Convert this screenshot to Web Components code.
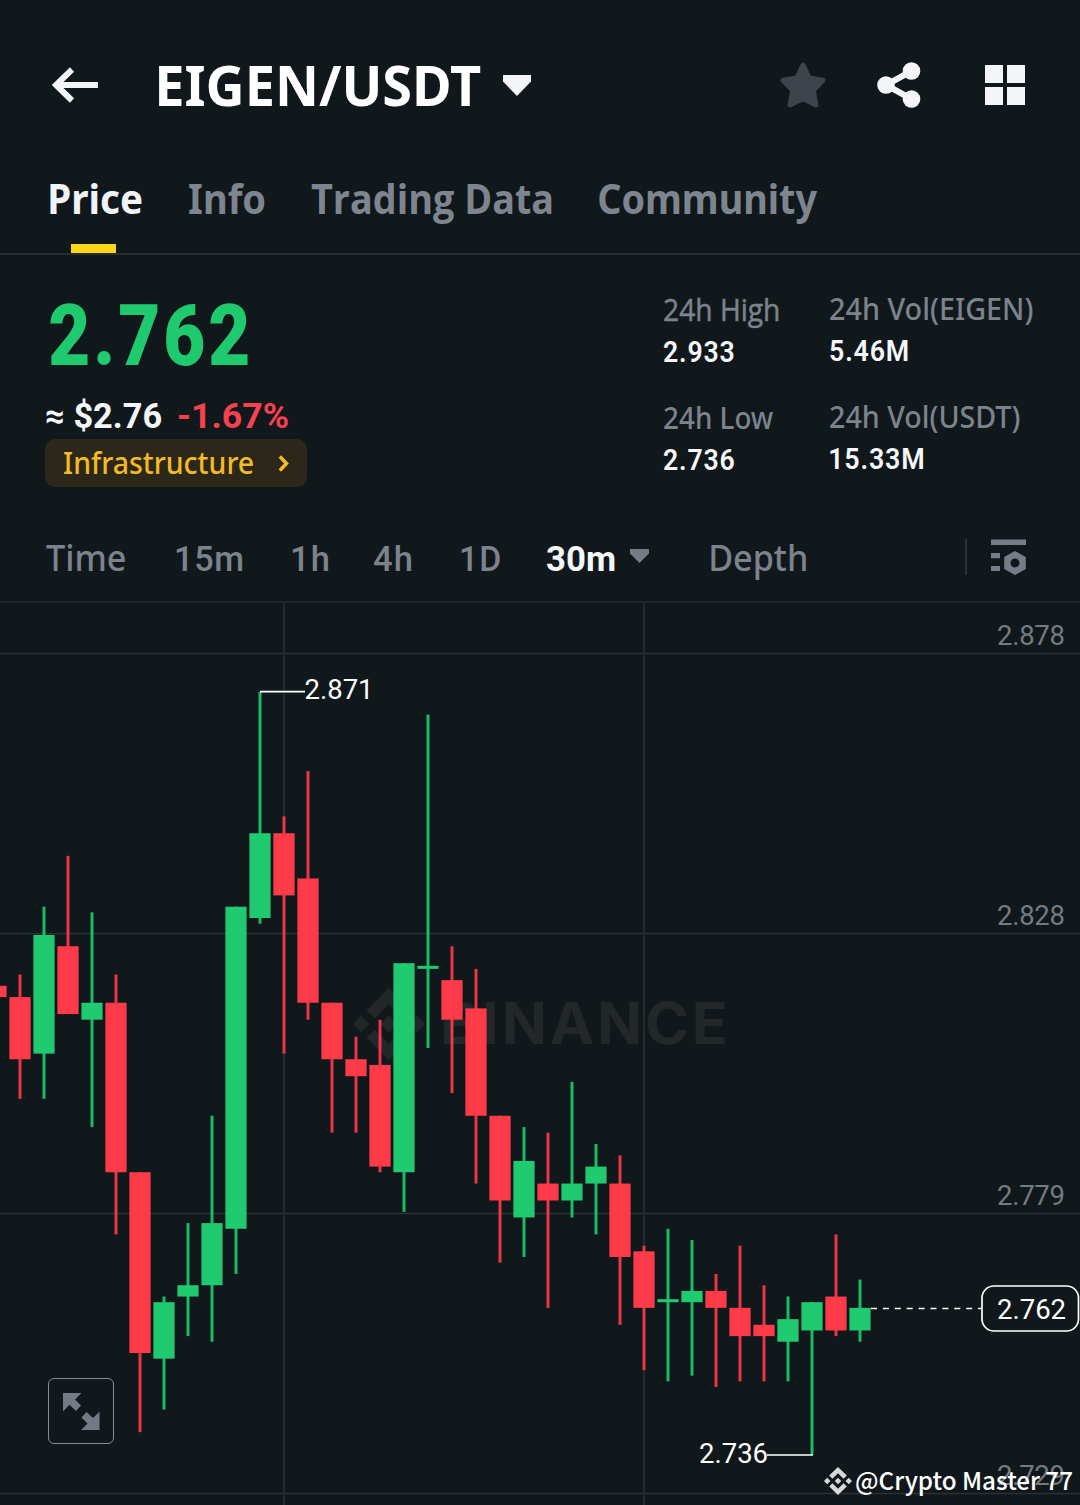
<!DOCTYPE html>
<html lang="en">
<head>
<meta charset="utf-8">
<title>EIGEN/USDT</title>
<style>
html, body {
  margin: 0;
  background: #11181c;
}
body {
  width: 1080px;
  height: 1505px;
  overflow: hidden;
}
</style>
</head>
<body>
<market-page></market-page>

<script>
const define = (name, html, setup) => {
  const template = document.createElement('template');
  template.innerHTML = html;
  window.customElements.define(name, class extends HTMLElement {
    constructor() {
      super();
      const root = this.attachShadow({ mode: 'open' });
      root.appendChild(template.content.cloneNode(true));
    }

    connectedCallback() {
      if (setup) setup(this, this.shadowRoot);
    }
  });
};

// A label whose box is its ink: `w` wide and `cap` high, baseline on the bottom edge.
const measure = document.createElement('canvas').getContext('2d');
const CAPS = { 'Roboto': 0.711, 'Noto Sans': 0.714, 'Open Sans': 0.714, 'Inter': 0.727, 'Noto Sans CJK SC': 0.733 };

define('fit-text', `
<style>
:host {
  display: block;
  flex: none;
}
span {
  display: block;
  width: max-content;
  white-space: nowrap;
  transform-origin: 0 0;
}
</style>
<span><slot></slot></span>
`, (me, root) => {
  const family = me.getAttribute('font') || 'Noto Sans';
  const weight = me.getAttribute('weight') || '400';
  const w = Number(me.getAttribute('w'));
  const cap = Number(me.getAttribute('cap'));
  const size = cap / CAPS[family];
  const spacing = `${size * Number(me.getAttribute('spacing') || 0)}px`;
  measure.font = `${weight} ${size}px "${family}", sans-serif`;
  measure.letterSpacing = spacing;
  const m = measure.measureText(me.textContent);
  const scale = w / (m.actualBoundingBoxLeft + m.actualBoundingBoxRight);
  const x = m.actualBoundingBoxLeft * scale;
  const y = (cap - m.fontBoundingBoxAscent + m.fontBoundingBoxDescent) / 2;
  me.style.width = `${w}px`;
  me.style.height = `${cap}px`;
  const span = root.querySelector('span');
  span.style.font = `${weight} ${size}px/${cap}px "${family}", sans-serif`;
  span.style.letterSpacing = spacing;
  span.style.transform = `translate(${x}px, ${y}px) scaleX(${scale})`;
});

const BINANCE = `
  <path d="M38.2 53.2 63.3 28.1 88.5 53.2 103.1 38.6 63.3 0 23.6 38.6Z
    M0 63.3 14.6 48.7 29.2 63.3 14.6 77.9Z
    M38.2 73.4 63.3 98.5 88.5 73.4 103.1 88 63.3 126.6 23.6 88Z
    M97.4 63.3 112 48.7 126.6 63.3 112 77.9Z
    M63.3 48.4 78.2 63.3 63.3 78.2 48.4 63.3Z"/>`;

const ICONS = {
  back: [46, 36, '<path d="M20 2.500 4 18l16 15.500M4.500 18H46" fill="none" stroke="currentColor" stroke-width="6"/>'],
  caret: [28, 21, '<path d="M0 0H28V6.500L14 21 0 6.500Z"/>'],
  star: [46, 46, '<path d="M23 3 29.200 16 43 18.200 33.200 28.500 36 43 23 36.500 10 43 12.800 28.500 3 18.200 16.800 16Z" stroke="currentColor" stroke-width="5" stroke-linejoin="round"/>'],
  share: [44, 46, '<path d="M34.500 9 9 23l25.500 14" fill="none" stroke="currentColor" stroke-width="6"/><circle cx="34.500" cy="9" r="8.800"/><circle cx="9" cy="23" r="8.800"/><circle cx="34.500" cy="37" r="8.800"/>'],
  grid: [40, 40, '<path d="M0 0H18V18H0ZM22 0H40V18H22ZM0 22H18V40H0ZM22 22H40V40H22Z"/>'],
  chevron: [11, 17, '<path d="M1.800 1.500 8.500 8.500 1.800 15.500" fill="none" stroke="currentColor" stroke-width="3.500"/>'],
  drop: [19, 14, '<path d="M0 0H19V4.500L9.500 14 0 4.500Z"/>'],
  settings: [35, 36, '<path d="M0 .5H35V6H0ZM0 14H9V19.200H0ZM0 27H9V32H0Z"/><path fill-rule="evenodd" d="M24 12 34.800 18V30L24 36 13.200 30V18ZM24 19.500a4.500 4.500 0 1 0 0 9 4.500 4.500 0 1 0 0-9Z"/>'],
  expand: [37, 37, '<path d="M0 0H18.500L12 6.500 18 12.500 13 18 6.500 11.800 0 18.500ZM36.500 37H18L24.500 30.500 18.500 24.500 23.500 19 30 25 36.500 18.500Z"/>'],
  binance: [126.6, 126.6, BINANCE],
};

define('ui-icon', `
<style>
:host {
  display: block;
  flex: none;
}
svg {
  display: block;
  fill: currentColor;
}
</style>
<div></div>
`, (me, root) => {
  const [w, h, shape] = ICONS[me.getAttribute('name')];
  const size = me.getAttribute('size');
  root.querySelector('div').innerHTML =
    `<svg width="${size || w}" height="${size || h}" viewBox="0 0 ${w} ${h}">${shape}</svg>`;
});

define('pair-header', `
<style>
:host {
  display: flex;
  align-items: center;
  box-sizing: border-box;
  height: 170px;
  padding: 0 55px 0 52px;
  color: #f3f5f9;
}
.title {
  margin: 2px 22px 0 61px;
  color: #fff;
}
.actions {
  display: flex;
  align-items: center;
  margin-left: auto;
}
.star {
  color: #3e444c;
  margin-right: 51px;
}
.share {
  margin-right: 64px;
}
</style>
<ui-icon name="back"></ui-icon>
<fit-text class="title" weight="700" w="322" cap="40">EIGEN/USDT</fit-text>
<ui-icon name="caret"></ui-icon>
<div class="actions">
  <ui-icon class="star" name="star"></ui-icon>
  <ui-icon class="share" name="share"></ui-icon>
  <ui-icon name="grid"></ui-icon>
</div>
`);

define('page-tabs', `
<style>
:host {
  display: flex;
  box-sizing: border-box;
  height: 85px;
  padding: 14px 0 0 50px;
  gap: 46.500px;
  border-bottom: 2px solid #252b2f;
  color: #7e858f;
}
.active {
  position: relative;
  color: #f0f3f8;
}
.active::after {
  content: '';
  position: absolute;
  left: 21px;
  top: 60px;
  width: 45px;
  height: 9px;
  background: #fcd41a;
}
</style>
<div class="active"><fit-text weight="700" w="92" cap="30">Price</fit-text></div>
<fit-text weight="700" w="76" cap="30">Info</fit-text>
<fit-text font="Open Sans" weight="700" w="241" cap="30">Trading Data</fit-text>
<fit-text weight="700" w="218" cap="30">Community</fit-text>
`);

define('stat-item', `
<style>
:host {
  display: flex;
  flex-direction: column;
  gap: 20px;
  color: #7c838c;
}
::slotted([slot=value]) {
  color: #f5f7fa;
}
</style>
<slot></slot>
<slot name="value"></slot>
`);

define('price-summary', `
<style>
:host {
  display: flex;
  justify-content: space-between;
  box-sizing: border-box;
  height: 265px;
  padding: 0 47px 0 45px;
}
.price {
  margin: 49px 0 0 5px;
  color: #1fc96e;
}
.change {
  display: flex;
  gap: 17px;
  margin: 38px 0 11px 1px;
  color: #f3f5f9;
}
.down {
  color: #f6414f;
}
.tag {
  display: flex;
  align-items: center;
  justify-content: space-between;
  box-sizing: border-box;
  width: 262px;
  height: 48px;
  padding: 0 18px 0 19px;
  border-radius: 10px;
  background: #2b2819;
  color: #f4b927;
}
.tag fit-text {
  margin-top: 2px;
}
.stats {
  display: flex;
  gap: 51px;
}
.stats div {
  display: flex;
  flex-direction: column;
  gap: 45.500px;
  width: 115.500px;
  margin-top: 44.500px;
}
.stats div + div {
  width: 203px;
  margin-top: 43.500px;
}
.high {
  -webkit-text-stroke: .5px currentColor;
}
</style>
<div>
  <fit-text class="price" font="Roboto" weight="900" spacing=".04" w="198" cap="61">2.762</fit-text>
  <div class="change">
    <fit-text font="Roboto" weight="700" w="115" cap="25">≈ $2.76</fit-text>
    <fit-text class="down" font="Roboto" weight="700" w="110" cap="25">-1.67%</fit-text>
  </div>
  <div class="tag">
    <fit-text weight="500" w="189" cap="21.500">Infrastructure</fit-text>
    <ui-icon name="chevron"></ui-icon>
  </div>
</div>
<div class="stats">
  <div>
    <stat-item>
      <fit-text class="high" font="Open Sans" w="115" cap="21.500">24h High</fit-text>
      <fit-text slot="value" font="Roboto" weight="600" spacing=".03" w="70" cap="21">2.933</fit-text>
    </stat-item>
    <stat-item>
      <fit-text weight="500" w="109" cap="21.500">24h Low</fit-text>
      <fit-text slot="value" font="Roboto" weight="600" spacing=".03" w="70" cap="21">2.736</fit-text>
    </stat-item>
  </div>
  <div>
    <stat-item>
      <fit-text weight="500" w="203" cap="21.500">24h Vol(EIGEN)</fit-text>
      <fit-text slot="value" font="Roboto" weight="600" spacing=".03" w="77.500" cap="21">5.46M</fit-text>
    </stat-item>
    <stat-item>
      <fit-text weight="500" w="190" cap="21.500">24h Vol(USDT)</fit-text>
      <fit-text slot="value" font="Roboto" weight="600" spacing=".03" w="93" cap="21">15.33M</fit-text>
    </stat-item>
  </div>
</div>
`);

define('interval-bar', `
<style>
:host {
  display: flex;
  align-items: center;
  box-sizing: border-box;
  height: 83px;
  padding: 0 54px 3px 46px;
  gap: 49px;
  border-bottom: 2px solid #20262a;
  color: #7c838c;
}
.current {
  display: flex;
  align-items: center;
  gap: 15px;
  margin: 0 13px 0 -2px;
}
.current fit-text {
  color: #f5f7fa;
}
.current ui-icon {
  margin-top: -7px;
  color: #747b84;
}
.fifteen {
  margin-left: 2px;
}
.four {
  margin-left: -4px;
}
.day {
  margin-left: 1px;
}
.tools {
  display: flex;
  align-items: center;
  gap: 24px;
  margin: -5px 0 0 auto;
  color: #777d88;
}
.tools::before {
  content: '';
  width: 2px;
  height: 36px;
  background: #2b3136;
}
</style>
<fit-text weight="500" w="79" cap="25.500">Time</fit-text>
<fit-text class="fifteen" font="Roboto" weight="500" spacing=".02" w="67" cap="25.500">15m</fit-text>
<fit-text font="Roboto" weight="500" spacing=".03" w="36" cap="25.500">1h</fit-text>
<fit-text class="four" font="Roboto" weight="500" spacing=".03" w="38" cap="25.500">4h</fit-text>
<fit-text class="day" font="Roboto" weight="500" spacing=".03" w="39" cap="25.500">1D</fit-text>
<div class="current">
  <fit-text font="Roboto" weight="700" w="68" cap="25.500">30m</fit-text>
  <ui-icon name="drop"></ui-icon>
</div>
<fit-text weight="500" w="95" cap="25.500">Depth</fit-text>
<div class="tools"><ui-icon name="settings"></ui-icon></div>
`);

// open, high, low, close in thousandths of a dollar
const CANDLES = [
  [2819, 2819, 2817, 2817], [2817, 2821, 2799, 2806], [2807, 2833, 2799, 2828],
  [2826, 2842, 2814, 2814], [2813, 2832, 2794, 2816], [2816, 2821, 2775, 2786],
  [2786, 2786, 2740, 2754], [2753, 2764, 2744, 2763], [2764, 2777, 2757, 2766],
  [2766, 2796, 2756, 2777], [2776, 2833, 2768, 2833], [2831, 2871, 2830, 2846],
  [2846, 2849, 2807, 2835], [2838, 2857, 2813, 2816], [2816, 2816, 2793, 2806],
  [2806, 2810, 2793, 2803], [2805, 2813, 2786, 2787], [2786, 2823, 2779, 2823],
  [2822, 2867, 2808, 2822], [2820, 2826, 2800, 2813], [2815, 2822, 2784, 2796],
  [2796, 2796, 2770, 2781], [2778, 2794, 2771, 2788], [2784, 2793, 2762, 2781],
  [2781, 2802, 2778, 2784], [2784, 2791, 2775, 2787], [2784, 2789, 2759, 2771],
  [2772, 2773, 2751, 2762], [2763, 2776, 2749, 2763], [2763, 2774, 2750, 2765],
  [2765, 2768, 2748, 2762], [2762, 2773, 2749, 2757], [2759, 2766, 2749, 2757],
  [2756, 2764, 2749, 2760], [2758, 2763, 2736, 2763], [2764, 2775, 2757, 2758],
  [2758, 2767, 2756, 2762],
];
const STEP = 24;
const priceY = p => 89 + (2871 - p) * 5.65;

define('candle-chart', `
<style>
:host {
  display: block;
  position: relative;
  height: 902px;
}
svg {
  display: block;
}
.grid {
  stroke: #2b3035;
  stroke-width: 1.500;
}
.up {
  fill: #20ca70;
}
.down {
  fill: #ff3b49;
}
.wick {
  opacity: .9;
}
.leader {
  fill: none;
  stroke: #fff;
  stroke-width: 1.700;
}
text {
  font: 400 27.500px Roboto, sans-serif;
  fill: #fff;
}
.axis {
  fill: #747a80;
}
.mark {
  position: absolute;
  left: 353px;
  top: 385px;
  display: flex;
  align-items: center;
  gap: 18px;
  color: #23272a;
}
.candles {
  position: relative;
}
.expand {
  position: absolute;
  left: 48px;
  top: 775px;
  display: grid;
  place-items: center;
  box-sizing: border-box;
  width: 66px;
  height: 66px;
  border: 1.500px solid #858b91;
  border-radius: 6px;
  color: #737a85;
}
.credit {
  position: absolute;
  right: 8px;
  bottom: 10px;
  display: flex;
  align-items: center;
  gap: 4px;
  color: #fff;
}
.credit ui-icon {
  color: #d6d8da;
}
</style>
<div class="mark">
  <ui-icon name="binance" size="72"></ui-icon>
  <fit-text font="Inter" weight="700" spacing=".05" w="282" cap="41.500">BINANCE</fit-text>
</div>
<svg class="candles" width="1080" height="902"></svg>
<div class="expand"><ui-icon name="expand"></ui-icon></div>
<div class="credit">
  <ui-icon name="binance" size="28"></ui-icon>
  <fit-text font="Noto Sans CJK SC" weight="500" w="216" cap="18">@Crypto Master 77</fit-text>
</div>
`, (me, root) => {
  const parts = [];
  for (const x of [284, 644]) parts.push(`<path class="grid" d="M${x} 0V902"/>`);
  [2878, 2828, 2779, 2729].forEach((p, i) => {
    const y = 50.5 + i * 280;
    parts.push(`<path class="grid" d="M0 ${y}H1080"/>`);
    parts.push(`<text class="axis" x="997" y="${y - 9}" textLength="68">${(p / 1000).toFixed(3)}</text>`);
  });
  CANDLES.forEach(([open, high, low, close], i) => {
    const x = i * STEP - 4;
    const top = priceY(Math.max(open, close));
    const bottom = priceY(Math.min(open, close));
    const h = bottom - top;
    parts.push(`<g class="${close >= open ? 'up' : 'down'}">
      <rect class="wick" x="${x - 1.5}" y="${priceY(high)}" width="3" height="${priceY(low) - priceY(high)}"/>
      <rect x="${x - 10.6}" y="${h ? top : top - 3}" width="21.2" height="${h || 3}"/>
    </g>`);
  });
  parts.push(`
    <path class="leader" d="M260 88.700H305M767 852H813"/>
    <text x="304.500" y="96">2.871</text>
    <text x="699" y="860">2.736</text>
    <path class="leader" d="M871 705.500H982" stroke-dasharray="6 5.900"/>
    <rect class="leader" x="982" y="683" width="96.500" height="45" rx="12"/>
    <text x="997" y="716">2.762</text>`);
  root.querySelector('.candles').innerHTML = parts.join('');
});

define('market-page', `
<style>
:host {
  display: block;
  width: 1080px;
}
</style>
<pair-header></pair-header>
<page-tabs></page-tabs>
<price-summary></price-summary>
<interval-bar></interval-bar>
<candle-chart></candle-chart>
`);
</script>
</body>
</html>
